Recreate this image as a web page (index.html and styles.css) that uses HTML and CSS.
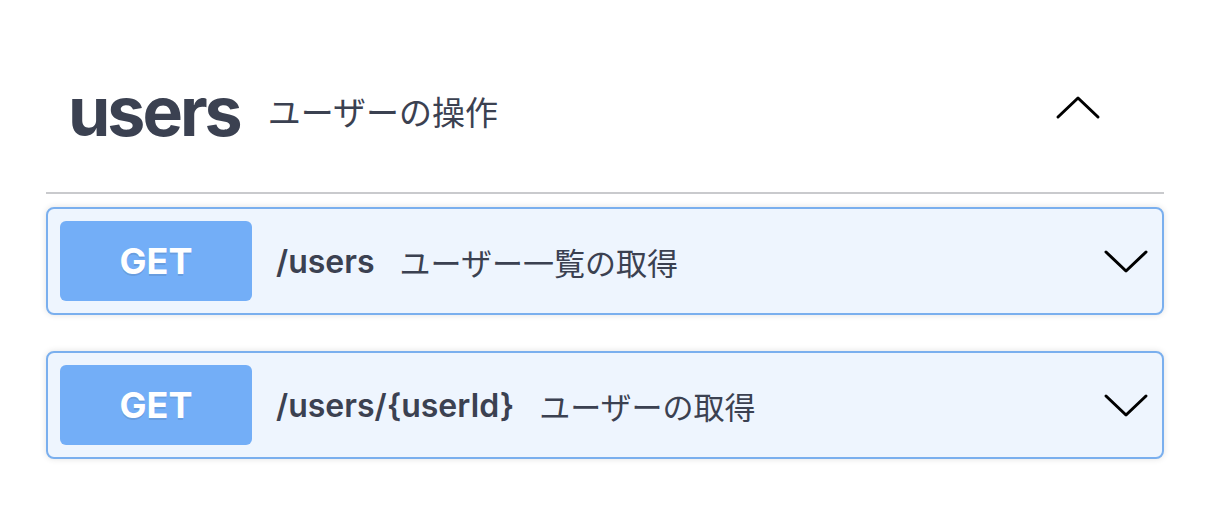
FILE: index.html
```html
<!DOCTYPE html>
<html lang="ja">
<head>
<meta charset="utf-8">
<link rel="stylesheet" href="styles.css">
</head>
<body>
<div class="page">
  <div class="tag">
    <h3 class="tag-name">users</h3>
    <span class="tag-desc">ユーザーの操作</span>
    <svg class="chev-up" width="46" height="25" viewBox="0 0 46 25"><polyline points="3,22 23,3 43,22" fill="none" stroke="#000" stroke-width="3" stroke-linecap="round" stroke-linejoin="round"/></svg>
  </div>
  <div class="opblock">
    <span class="method">GET</span>
    <span class="path">/users</span>
    <span class="desc">ユーザー一覧の取得</span>
    <svg class="chev-down" width="46" height="25" viewBox="0 0 46 25"><polyline points="3,3 23,22 43,3" fill="none" stroke="#000" stroke-width="3" stroke-linecap="round" stroke-linejoin="round"/></svg>
  </div>
  <div class="opblock">
    <span class="method">GET</span>
    <span class="path">/users/{userId}</span>
    <span class="desc">ユーザーの取得</span>
    <svg class="chev-down" width="46" height="25" viewBox="0 0 46 25"><polyline points="3,3 23,22 43,3" fill="none" stroke="#000" stroke-width="3" stroke-linecap="round" stroke-linejoin="round"/></svg>
  </div>
</div>
</body>
</html>
```
FILE: styles.css
```css
html, body {
  margin: 0;
  padding: 0;
  background: #ffffff;
}
body {
  font-family: Inter, "Noto Sans CJK JP", sans-serif;
  color: #3b4151;
}
.page {
  padding: 0 66px 0 46px;
}
.tag {
  display: flex;
  align-items: center;
  box-sizing: border-box;
  height: 194px;
  padding: 30px 0 0 22px;
  border-bottom: 2px solid #c9cacd;
  margin-bottom: 13px;
}
.tag-name {
  margin: 0;
  font-family: Inter, sans-serif;
  font-size: 68px;
  font-weight: 700;
  letter-spacing: -3px;
  line-height: 1;
  color: #3b4151;
}
.tag-desc {
  margin-left: 28px;
  font-family: "Noto Sans CJK JP", sans-serif;
  font-size: 33px;
  font-weight: 400;
  color: #3b4151;
}
.chev-up {
  margin-left: auto;
  margin-right: 63px;
  margin-top: -8px;
}
.opblock {
  display: flex;
  align-items: center;
  padding: 12px;
  border: 2px solid #7aafee;
  border-radius: 8px;
  background: #eef5fe;
  box-shadow: 0 0 6px rgba(0, 0, 0, 0.12);
  margin-bottom: 36px;
}
.method {
  display: flex;
  align-items: center;
  justify-content: center;
  width: 192px;
  height: 80px;
  border-radius: 6px;
  background: #73aef7;
  color: #ffffff;
  font-family: Inter, sans-serif;
  font-size: 36px;
  font-weight: 700;
  text-shadow: 0 2px 0 rgba(0, 0, 0, 0.1);
}
.path {
  margin-left: 24px;
  font-family: Inter, sans-serif;
  font-size: 32px;
  font-weight: 600;
  color: #3b4151;
}
.desc {
  margin-left: 25px;
  font-family: "Noto Sans CJK JP", sans-serif;
  font-size: 31px;
  font-weight: 400;
  color: #3b4151;
}
.chev-down {
  margin-left: auto;
  margin-right: 1px;
}
```
